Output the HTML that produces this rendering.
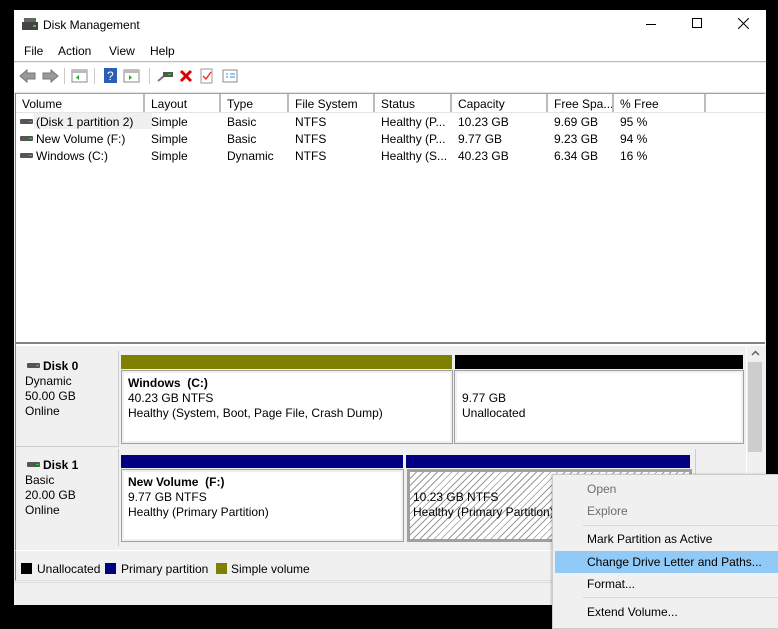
<!DOCTYPE html>
<html><head><style>
*{margin:0;padding:0;box-sizing:border-box}
body{width:778px;height:625px;background:#000;position:relative;overflow:hidden;font-family:"Liberation Sans",sans-serif;font-size:12px;color:#000}
.a{position:absolute}
.t{position:absolute;white-space:nowrap;line-height:14px}
.win{left:14px;top:10px;width:752px;height:595px;background:#f0f0f0}
.hdr{top:83px;height:20px;background:#fff;border-top:1px solid #a0a0a0;border-bottom:1px solid #e5e5e5}
.col{position:absolute;top:0;height:18px;border-right:2px solid #bcbcbc;padding:3px 0 0 6px;line-height:14px;white-space:nowrap;overflow:hidden}
.drv{display:inline-block;width:13px;height:5px;background:#555;border-radius:1px;position:relative;top:-2px;margin-right:3px}
.drv:after{content:"";position:absolute;right:1px;top:2px;width:3px;height:1px;background:#3c3}
.box{background:#fff;border:1px solid #a0a0a0;box-shadow:inset 0 0 0 2px #f0f0f0;}
.mi{position:absolute;left:34px;line-height:14px}
</style></head><body>
<div class="a win">
 <div class="a" style="left:0;top:0;width:752px;height:30px;background:#fff"></div>
 <svg class="a" style="left:8px;top:7px" width="16" height="14"><rect x="2" y="1" width="12" height="5" fill="#666"/><rect x="0" y="5" width="16" height="8" fill="#444"/><rect x="11" y="8" width="3" height="2" fill="#3c3"/></svg>
 <div class="t" style="left:29px;top:8px">Disk Management</div>
 <div class="a" style="left:632px;top:14px;width:10px;height:1px;background:#000"></div>
 <div class="a" style="left:678px;top:8px;width:10px;height:10px;border:1px solid #000"></div>
 <svg class="a" style="left:724px;top:8px" width="11" height="11"><path d="M0 0L11 11M11 0L0 11" stroke="#000" stroke-width="1"/></svg>
 <div class="a" style="left:0;top:30px;width:752px;height:22px;background:#fff;border-bottom:1px solid #bbb"></div>
 <div class="t" style="left:10px;top:34px">File</div>
 <div class="t" style="left:44px;top:34px">Action</div>
 <div class="t" style="left:95px;top:34px">View</div>
 <div class="t" style="left:136px;top:34px">Help</div>
 <div class="a" style="left:0;top:53px;width:752px;height:30px;background:#fff;border-bottom:1px solid #e5e5e5"></div>
 <svg class="a" style="left:4px;top:57px" width="240" height="18">
  <path d="M2 9L9 3V6H17V12H9V15Z" fill="#999" stroke="#777"/>
  <path d="M40 9L33 3V6H25V12H33V15Z" fill="#999" stroke="#777"/>
  <rect x="46" y="1" width="1" height="16" fill="#ccc"/>
  <rect x="54" y="3" width="15" height="12" fill="#fff" stroke="#888"/><rect x="54" y="3" width="15" height="3" fill="#bbb"/><path d="M61 8L58 10.5L61 13Z" fill="#2a2"/>
  <rect x="76" y="1" width="1" height="16" fill="#ccc"/>
  <rect x="86" y="1" width="13" height="15" fill="#2b5fb5"/><text x="89" y="13" font-size="12" fill="#fff" font-family="Liberation Sans">?</text>
  <rect x="106" y="3" width="15" height="12" fill="#fff" stroke="#888"/><rect x="106" y="3" width="15" height="3" fill="#bbb"/><path d="M111 8L114 10.5L111 13Z" fill="#2a2"/>
  <rect x="131" y="1" width="1" height="16" fill="#ccc"/>
  <path d="M140 14L146 9" stroke="#777" stroke-width="2"/><rect x="145" y="5" width="10" height="5" fill="#555"/><rect x="150" y="7" width="3" height="1" fill="#3c3"/>
  <path d="M163 4L173 14M173 4L163 14" stroke="#d00" stroke-width="3"/>
  <rect x="183" y="2" width="11" height="14" fill="#fff" stroke="#999"/><path d="M185 9L188 12L193 5" stroke="#e33" stroke-width="1.5" fill="none"/>
  <rect x="205" y="3" width="14" height="12" fill="#fff" stroke="#888"/><path d="M208 7h2M212 7h5M208 10h2M212 10h5" stroke="#48c"/>
 </svg>
 <div class="a" style="left:1px;top:83px;width:750px;height:254px;background:#fff;border-left:1px solid #828282"></div>
 <div class="a hdr" style="left:2px;width:749px">
  <div class="col" style="left:0;width:129px">Volume</div>
  <div class="col" style="left:129px;width:76px">Layout</div>
  <div class="col" style="left:205px;width:68px">Type</div>
  <div class="col" style="left:273px;width:86px">File System</div>
  <div class="col" style="left:359px;width:77px">Status</div>
  <div class="col" style="left:436px;width:96px">Capacity</div>
  <div class="col" style="left:532px;width:66px">Free Spa...</div>
  <div class="col" style="left:598px;width:92px">% Free</div>
 </div>
 <div class="a" style="left:20px;top:103px;width:118px;height:16px;background:#f0f0f0"></div>
 <div class="t" style="left:6px;top:104px;line-height:17px">
 <span class="drv"></span>(Disk 1 partition 2)<br><span class="drv"></span>New Volume (F:)<br><span class="drv"></span>Windows (C:)</div>
 <div class="t" style="left:137px;top:104px;line-height:17px">Simple<br>Simple<br>Simple</div>
 <div class="t" style="left:213px;top:104px;line-height:17px">Basic<br>Basic<br>Dynamic</div>
 <div class="t" style="left:281px;top:104px;line-height:17px">NTFS<br>NTFS<br>NTFS</div>
 <div class="t" style="left:367px;top:104px;line-height:17px">Healthy (P...<br>Healthy (P...<br>Healthy (S...</div>
 <div class="t" style="left:444px;top:104px;line-height:17px">10.23 GB<br>9.77 GB<br>40.23 GB</div>
 <div class="t" style="left:540px;top:104px;line-height:17px">9.69 GB<br>9.23 GB<br>6.34 GB</div>
 <div class="t" style="left:606px;top:104px;line-height:17px">95 %<br>94 %<br>16 %</div>
 <div class="a" style="left:1px;top:332px;width:750px;height:2px;background:#828282"></div>
 <div class="a" style="left:1px;top:336px;width:750px;height:204px;background:#f0f0f0;border-left:1px solid #828282"></div>
 <div class="a" style="left:732px;top:336px;width:18px;height:204px;background:#f0f0f0;border-left:1px solid #fff"></div>
 <div class="a" style="left:734px;top:352px;width:14px;height:90px;background:#cdcdcd"></div>
 <svg class="a" style="left:737px;top:340px" width="9" height="6"><path d="M1 5L4.5 1.5L8 5" stroke="#606060" stroke-width="1.5" fill="none"/></svg>
 <div class="a" style="left:2px;top:341px;width:103px;height:96px;border-right:1px solid #ccc;border-bottom:1px solid #ccc"></div>
 <div class="t" style="left:13px;top:349px"><span class="drv"></span><b>Disk 0</b></div>
 <div class="t" style="left:11px;top:364px;line-height:15px">Dynamic<br>50.00 GB<br>Online</div>
 <div class="a" style="left:107px;top:345px;width:331px;height:14px;background:#808000"></div>
 <div class="a" style="left:441px;top:345px;width:288px;height:14px;background:#000"></div>
 <div class="a box" style="left:107px;top:360px;width:332px;height:74px"></div>
 <div class="a box" style="left:440px;top:360px;width:290px;height:74px"></div>
 <div class="t" style="left:114px;top:366px;line-height:15px"><b>Windows&nbsp; (C:)</b><br>40.23 GB NTFS<br>Healthy (System, Boot, Page File, Crash Dump)</div>
 <div class="t" style="left:448px;top:381px;line-height:15px">9.77 GB<br>Unallocated</div>
 <div class="a" style="left:2px;top:439px;width:103px;height:97px;border-right:1px solid #ccc"></div>
 <div class="t" style="left:13px;top:448px"><span class="drv"></span><b>Disk 1</b></div>
 <div class="t" style="left:11px;top:463px;line-height:15px">Basic<br>20.00 GB<br>Online</div>
 <div class="a" style="left:106px;top:439px;width:576px;height:97px;border-right:1px solid #ccc"></div>
 <div class="a" style="left:107px;top:445px;width:282px;height:13px;background:#000080"></div>
 <div class="a" style="left:392px;top:445px;width:284px;height:13px;background:#000080"></div>
 <div class="a box" style="left:107px;top:459px;width:283px;height:73px"></div>
 <div class="a" style="left:393px;top:459px;width:285px;height:73px;border:3px solid #a0a0a0;background:repeating-linear-gradient(135deg,#fff 0 4px,#999 4px 5px)"></div>
 <div class="t" style="left:114px;top:465px;line-height:15px"><b>New Volume&nbsp; (F:)</b><br>9.77 GB NTFS<br>Healthy (Primary Partition)</div>
 <div class="t" style="left:399px;top:480px;line-height:15px">10.23 GB NTFS<br>Healthy (Primary Partition)</div>
 <div class="a" style="left:1px;top:540px;width:750px;height:31px;background:#f0f0f0;border-left:1px solid #828282;border-top:1px solid #fff;border-bottom:1px solid #ddd"></div>
 <div class="a" style="left:7px;top:553px;width:11px;height:11px;background:#000"></div>
 <div class="t" style="left:23px;top:552px">Unallocated</div>
 <div class="a" style="left:91px;top:553px;width:11px;height:11px;background:#000080"></div>
 <div class="t" style="left:107px;top:552px">Primary partition</div>
 <div class="a" style="left:202px;top:553px;width:11px;height:11px;background:#808000"></div>
 <div class="t" style="left:217px;top:552px">Simple volume</div>
 <div class="a" style="left:0;top:572px;width:752px;height:23px;background:#f0f0f0;border-top:1px solid #ddd"></div>
</div>
<div class="a" style="left:552px;top:474px;width:230px;height:155px;background:#f0f0f0;border:1px solid #ccc;box-shadow:-1px 0 2px rgba(0,0,0,.2)">
 <div class="mi" style="top:7px;color:#6d6d6d">Open</div>
 <div class="mi" style="top:29px;color:#6d6d6d">Explore</div>
 <div class="a" style="left:30px;top:50px;width:200px;height:1px;background:#d7d7d7"></div>
 <div class="mi" style="top:57px">Mark Partition as Active</div>
 <div class="a" style="left:2px;top:76px;width:228px;height:22px;background:#91c9f7"></div>
 <div class="mi" style="top:80px">Change Drive Letter and Paths...</div>
 <div class="mi" style="top:102px">Format...</div>
 <div class="a" style="left:30px;top:122px;width:200px;height:1px;background:#d7d7d7"></div>
 <div class="mi" style="top:130px">Extend Volume...</div>
</div>
</body></html>
